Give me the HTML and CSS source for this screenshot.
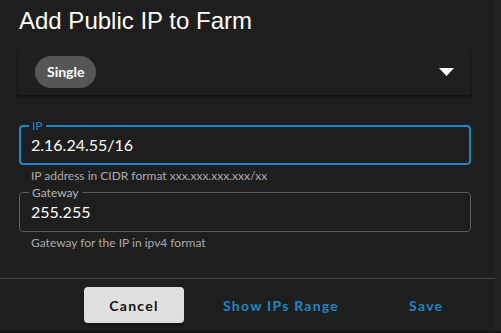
FILE: index.html
```html
<!DOCTYPE html>
<html lang="en">
<head>
  <meta charset="UTF-8" />
  <title>Add Public IP to Farm</title>
  <link rel="stylesheet" href="styles.css">
</head>
<body>

<div class="page">
  <div class="dialog">
    <h2 class="title">Add Public IP to Farm</h2>

    <div class="content">
      <div class="select-card">
        <span class="chip">Single</span>
        <svg class="caret" width="15" height="8" viewBox="0 0 15 8">
          <path d="M0 0 L15 0 L7.5 8 Z" fill="#fff"/>
        </svg>
      </div>

      <div class="field focused">
        <label>IP</label>
        <div class="value">2.16.24.55/16</div>
      </div>
      <div class="hint">IP address in CIDR format xxx.xxx.xxx.xxx/xx</div>

      <div class="field">
        <label>Gateway</label>
        <div class="value">255.255</div>
      </div>
      <div class="hint">Gateway for the IP in ipv4 format</div>
    </div>

    <div class="divider"></div>

    <div class="actions">
      <button class="btn cancel">Cancel</button>
      <button class="btn text range">Show IPs Range</button>
      <button class="btn text save">Save</button>
    </div>
  </div>
  <div class="scrollbar"></div>
</div>

</body>
</html>
```

FILE: styles.css
```css
* {
  box-sizing: border-box;
}
body {
  margin: 0;
  background: #161616;
  font-family: 'Lato', sans-serif;
  color: #fff;
}

.page {
  display: flex;
  height: 331px;
  background: #1e1e1e;
}

.dialog {
  flex: 1;
  display: flex;
  flex-direction: column;
}

.scrollbar {
  width: 6px;
  background: #232323;
}

.title {
  margin: 0;
  padding: 5px 19px 0;
  font-family: 'Liberation Sans', Arial, sans-serif;
  font-weight: 400;
  font-size: 24px;
  line-height: 32px;
  color: #fff;
}

.content {
  padding: 11px 24px 0 18px;
}

.select-card {
  display: flex;
  align-items: center;
  justify-content: space-between;
  height: 47px;
  padding: 0 17px;
  background: #1f1f1f;
  border-radius: 4px;
  box-shadow: 0 2px 3px rgba(0, 0, 0, 0.45);
}

.chip {
  display: inline-block;
  height: 32px;
  line-height: 32px;
  padding: 0 12px;
  border-radius: 16px;
  background: #565656;
  font-size: 14px;
  font-weight: 700;
}

.caret {
  display: block;
}

.field {
  position: relative;
  height: 40px;
  margin: 30px 0 0 1px;
  border: 1px solid #5a5a5a;
  border-radius: 4px;
  padding: 0 11px;
}

.field label {
  position: absolute;
  top: -6px;
  left: 9px;
  padding: 0 3px;
  font-size: 12px;
  line-height: 12px;
  color: #b5b5b5;
  background: #1e1e1e;
}

.field .value {
  font-size: 16px;
  line-height: 38px;
  color: #fff;
}

.field.focused {
  border: 2px solid #1b87c6;
  padding: 0 10px;
}

.field.focused label {
  top: -7px;
  left: 8px;
  color: #1b87c6;
}

.field.focused .value {
  line-height: 36px;
}

.hint + .field {
  margin-top: 9px;
}

.hint {
  padding: 4px 0 0 13px;
  font-size: 12px;
  line-height: 14px;
  color: #ababab;
}

.divider {
  margin-top: 28px;
  height: 1px;
  background: #444;
}

.actions {
  display: flex;
  align-items: center;
  padding: 8px 0 0 84px;
}

.btn {
  height: 36px;
  border: none;
  border-radius: 4px;
  font-family: 'Lato', sans-serif;
  font-size: 14px;
  font-weight: 700;
  letter-spacing: 1.25px;
  cursor: pointer;
}

.btn.cancel {
  width: 100px;
  background: #e0e0e0;
  color: #111;
  box-shadow: 0 2px 2px rgba(0, 0, 0, 0.3);
}

.btn.text {
  background: transparent;
  color: #1b87c6;
  padding: 0 16px;
}

.btn.range {
  margin-left: 23px;
}

.btn.save {
  margin-left: 38px;
}
```
